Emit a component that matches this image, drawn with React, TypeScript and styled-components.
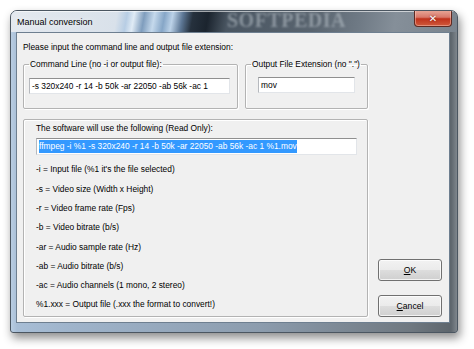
import React from "react";
import styled, { createGlobalStyle } from "styled-components";

const GlobalStyle = createGlobalStyle`
  html, body {
    margin: 0;
    padding: 0;
    background: #ffffff;
  }
  body {
    font-family: "Liberation Sans", Arial, sans-serif;
    font-size: 8.4px;
    color: #000;
  }
`;

const Page = styled.div`
  width: 474px;
  height: 349px;
  padding: 10px 0 0 10px;
  box-sizing: border-box;
`;

const Window = styled.div`
  width: 448px;
  height: 323px;
  box-sizing: border-box;
  display: flex;
  flex-direction: column;
  border: 1px solid #4b5661;
  border-radius: 7px 7px 3px 3px;
  background: linear-gradient(
    90deg,
    #b9cde2 0,
    #a8bed6 6px,
    #9fb4cb 60px,
    #8c9cad 250px,
    #6f7880 400px,
    #5d656c 440px,
    #8a9197 448px
  );
  box-shadow: 2px 5px 10px rgba(0, 0, 0, 0.45);
  overflow: hidden;
`;

const TitleBar = styled.div`
  position: relative;
  height: 21px;
  display: flex;
  align-items: flex-start;
  background: linear-gradient(
    100deg,
    #e4e9ef 0,
    #d9e1ea 105px,
    #b7cde4 115px,
    #e0ebf5 122px,
    #7f9dbd 132px,
    #c5d9ec 142px,
    #86a6c7 152px,
    #bcd2e8 160px,
    #5d7795 170px,
    #26313d 180px,
    #1b242e 195px,
    #4a5662 215px,
    #59646f 300px,
    #6f7a85 345px,
    #858f99 380px,
    #79838d 448px
  );
  box-shadow: inset 0 1px 0 rgba(255, 255, 255, 0.6);
`;

const Title = styled.span`
  padding: 5px 0 0 6px;
  font-size: 9px;
  line-height: 12px;
  color: #000;
  text-shadow: 0 0 6px rgba(255, 255, 255, 0.9);
  z-index: 1;
`;

const Watermark = styled.span`
  position: absolute;
  left: 216px;
  top: -2px;
  font-family: "Liberation Serif", serif;
  font-weight: 700;
  font-size: 20px;
  letter-spacing: 0.5px;
  color: rgba(185, 194, 203, 0.55);
  filter: blur(1.3px);
`;

const CloseButton = styled.div`
  margin-left: auto;
  margin-right: 5px;
  margin-top: -1px;
  width: 38px;
  height: 17px;
  box-sizing: border-box;
  display: flex;
  align-items: center;
  justify-content: center;
  border: 1px solid #5e2a22;
  border-top: none;
  border-radius: 0 0 4px 4px;
  background: linear-gradient(
    180deg,
    #e9aa9a 0,
    #d8786a 45%,
    #c0321c 55%,
    #cf5a3c 100%
  );
  box-shadow: inset 0 0 0 1px rgba(255, 210, 200, 0.45);
  color: #fff;
  font-family: "DejaVu Sans", sans-serif;
  font-weight: 700;
  font-size: 10px;
  text-shadow: 0 0 2px rgba(80, 0, 0, 0.8);
`;

const Client = styled.div`
  flex: 1;
  margin: 0 7px 9px 5px;
  border: 1px solid #6e7f90;
  background: #f0f0f0;
  display: flex;
  gap: 10px;
  padding: 8px 0 5px 6px;
  box-sizing: border-box;
`;

const MainColumn = styled.div`
  width: 345px;
  display: flex;
  flex-direction: column;
`;

const Prompt = styled.div`
  line-height: 12px;
  white-space: nowrap;
`;

const GroupRow = styled.div`
  display: flex;
  gap: 7px;
  margin-top: 5px;
`;

const Group = styled.fieldset<{ $width: number; $height: number }>`
  width: ${(p) => p.$width}px;
  height: ${(p) => p.$height}px;
  min-inline-size: 0;
  margin: 0;
  padding: 0 0 0 5px;
  box-sizing: border-box;
  border: 1px solid #b3b3b3;
  border-radius: 2px;
  box-shadow: inset 1px 1px 0 #ffffff, 1px 1px 0 #ffffff;
`;

const Legend = styled.legend`
  margin-left: 0;
  padding: 0 1px;
  line-height: 12px;
  font-size: 8.4px;
  white-space: nowrap;
`;

const TextBox = styled.div<{ $width: number; $height?: number; $top?: number; $left?: number }>`
  width: ${(p) => p.$width}px;
  height: ${(p) => p.$height ?? 16}px;
  margin-top: ${(p) => p.$top ?? 8}px;
  margin-left: ${(p) => p.$left ?? 0}px;
  box-sizing: border-box;
  background: #ffffff;
  border: 1px solid;
  border-color: #8f8f8f #e2e5e9 #e2e5e9 #b6b9be;
  padding-left: 2px;
  display: flex;
  align-items: center;
  white-space: nowrap;
  overflow: hidden;
`;

const Selected = styled.span`
  background: #3399ff;
  color: #ffffff;
  line-height: 13px;
`;

const InfoGroup = styled.fieldset`
  margin: 10px 0 0 0;
  min-inline-size: 0;
  width: 345px;
  height: 198px;
  box-sizing: border-box;
  padding: 2px 0 0 12px;
  border: 1px solid #b3b3b3;
  border-radius: 2px;
  box-shadow: inset 1px 1px 0 #ffffff, 1px 1px 0 #ffffff;
`;

const InfoHeading = styled.div`
  line-height: 12px;
  white-space: nowrap;
`;

const InfoLines = styled.div`
  margin-top: 5.4px;
`;

const InfoLine = styled.div`
  line-height: 19.3px;
  white-space: nowrap;
`;

const ButtonColumn = styled.div`
  display: flex;
  flex-direction: column;
  justify-content: flex-end;
  gap: 14px;
`;

const Button = styled.div`
  width: 64px;
  height: 22px;
  box-sizing: border-box;
  border: 1px solid #707070;
  border-radius: 3px;
  background: linear-gradient(180deg, #f2f2f2 0, #ebebeb 48%, #dddddd 52%, #cfcfcf 100%);
  box-shadow: inset 0 0 0 1px rgba(255, 255, 255, 0.75);
  display: flex;
  align-items: center;
  justify-content: center;
  font-size: 8.6px;
`;

const Mnemonic = styled.span`
  text-decoration: underline;
`;

const infoLines = [
  "-i = Input file (%1 it's the file selected)",
  "-s = Video size (Width x Height)",
  "-r = Video frame rate (Fps)",
  "-b = Video bitrate (b/s)",
  "-ar = Audio sample rate (Hz)",
  "-ab = Audio bitrate (b/s)",
  "-ac = Audio channels (1 mono, 2 stereo)",
  "%1.xxx = Output file (.xxx the format to convert!)",
];

const App = () => {
  return (
    <>
      <GlobalStyle />
      <Page>
        <Window>
          <TitleBar>
            <Title>Manual conversion</Title>
            <Watermark>SOFTPEDIA</Watermark>
            <CloseButton>✕</CloseButton>
          </TitleBar>
          <Client>
            <MainColumn>
              <Prompt>Please input the command line and output file extension:</Prompt>
              <GroupRow>
                <Group $width={215} $height={51}>
                  <Legend>Command Line (no -i or output file):</Legend>
                  <TextBox $width={201}>-s 320x240 -r 14 -b 50k -ar 22050 -ab 56k -ac 1</TextBox>
                </Group>
                <Group $width={123} $height={51}>
                  <Legend>Output File Extension (no ".")</Legend>
                  <TextBox $width={97} $top={7} $left={7}>
                    mov
                  </TextBox>
                </Group>
              </GroupRow>
              <InfoGroup>
                <InfoHeading>The software will use the following (Read Only):</InfoHeading>
                <TextBox $width={321} $height={17} $top={4}>
                  <Selected>ffmpeg -i %1 -s 320x240 -r 14 -b 50k -ar 22050 -ab 56k -ac 1 %1.mov</Selected>
                </TextBox>
                <InfoLines>
                  {infoLines.map((line) => (
                    <InfoLine key={line}>{line}</InfoLine>
                  ))}
                </InfoLines>
              </InfoGroup>
            </MainColumn>
            <ButtonColumn>
              <Button>
                <Mnemonic>O</Mnemonic>K
              </Button>
              <Button>
                <Mnemonic>C</Mnemonic>ancel
              </Button>
            </ButtonColumn>
          </Client>
        </Window>
      </Page>
    </>
  );
};

export default App;
